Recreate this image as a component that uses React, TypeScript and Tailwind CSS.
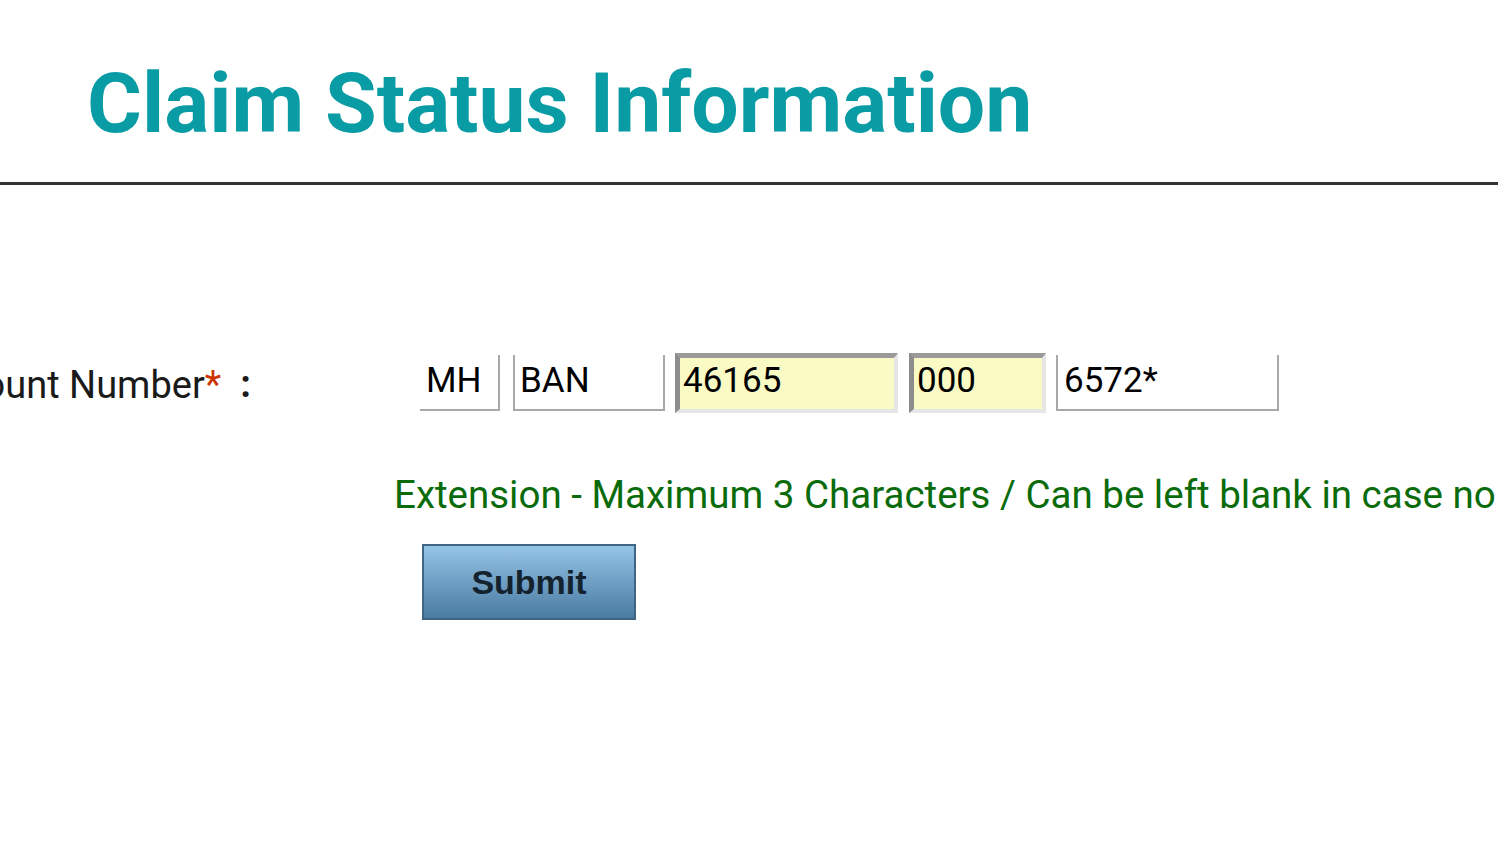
export default function App() {
  return (
    <div
      className="w-[1500px] h-[843px] overflow-hidden bg-white"
      style={{ fontFamily: "Roboto, 'Liberation Sans', sans-serif" }}
    >
      {/* header */}
      <div className="h-[182px] pl-[87px] pt-[54px]">
        <h1 className="text-[84px] leading-[100px] font-bold text-[#0a9ca4]">
          Claim Status Information
        </h1>
      </div>
      <div className="w-[1498px] h-[3px] bg-[#333333]" />

      {/* account number row */}
      <div className="mt-[170px] flex items-start">
        <div className="w-[501px] shrink-0 flex items-center h-[58px] -ml-[81px] text-[38px] text-[#1a1a1a]">
          <span className="whitespace-nowrap pt-[2px]">
            Account Number<span className="text-[#cc3300]">*</span>
          </span>
          <span className="ml-[19px] font-bold">:</span>
        </div>
        <div className="flex items-start">
          <div className="w-[80px] h-[56px] border-r-[2px] border-b-[2px] border-[#a8a8a8] text-[35px] text-black pl-[6px] leading-[52px]">
            MH
          </div>
          <div className="ml-[13px] w-[152px] h-[56px] border-l-[2px] border-r-[2px] border-b-[2px] border-[#a8a8a8] text-[35px] text-black pl-[5px] leading-[52px]">
            BAN
          </div>
          <div className="ml-[10px] -mt-[2px] w-[223px] h-[60px] bg-[#fafac4] border-l-[5px] border-t-[5px] border-r-[4px] border-b-[4px] border-l-[#8c8c8c] border-t-[#9a9a9a] border-r-[#e6e6e6] border-b-[#e6e6e6] text-[35px] text-black pl-[3px] leading-[46px]">
            46165
          </div>
          <div className="ml-[11px] -mt-[2px] w-[137px] h-[60px] bg-[#fafac4] border-l-[5px] border-t-[5px] border-r-[4px] border-b-[4px] border-l-[#8c8c8c] border-t-[#9a9a9a] border-r-[#e6e6e6] border-b-[#e6e6e6] text-[35px] text-black pl-[3px] leading-[46px]">
            000
          </div>
          <div className="ml-[10px] w-[223px] h-[56px] border-l-[2px] border-r-[2px] border-b-[2px] border-[#a8a8a8] text-[35px] text-black pl-[6px] leading-[52px]">
            6572*
          </div>
        </div>
      </div>

      {/* hint */}
      <div className="mt-[57px] pl-[394px] text-[38.5px] leading-[50px] text-[#0a6b0a] whitespace-nowrap">
        Extension - Maximum 3 Characters / Can be left blank in case no extension
      </div>

      {/* submit */}
      <div className="mt-[24px] pl-[422px]">
        <button
          type="button"
          className="w-[214px] h-[76px] border-[2px] border-[#3f6582] bg-gradient-to-b from-[#95c4e6] to-[#4a7ba2] text-[34px] font-bold text-[#14222e]"
          style={{ fontFamily: "'Liberation Sans', Arial, sans-serif" }}
        >
          Submit
        </button>
      </div>
    </div>
  );
}
